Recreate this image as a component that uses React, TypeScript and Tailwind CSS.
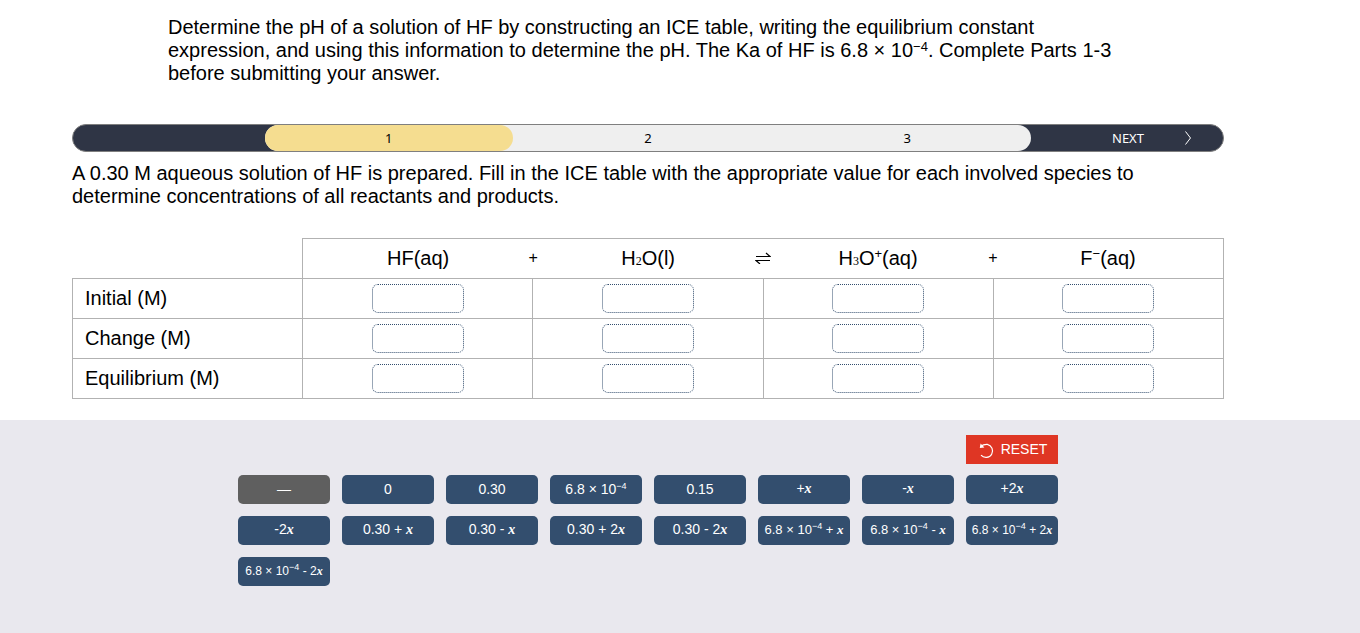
import type { ReactNode } from "react";
import { useState } from "react";

const X = () => <i className="font-['Liberation_Serif',serif] font-bold">x</i>;

const Sub = ({ children }: { children: ReactNode }) => (
  <span className="font-['Liberation_Serif',serif] text-xs">{children}</span>
);

const Sup = ({ children }: { children: ReactNode }) => (
  <sup className="text-[13px]">{children}</sup>
);

const Ka = () => (
  <>
    6.8 × 10<sup className="text-[9px]">−4</sup>
  </>
);

type Tile = {
  id: string;
  label: ReactNode;
  size?: "base" | "small" | "tiny";
  muted?: boolean;
};

const tiles: Tile[] = [
  { id: "blank", label: "—", muted: true },
  { id: "0", label: "0" },
  { id: "0.30", label: "0.30" },
  { id: "ka", label: <Ka /> },
  { id: "0.15", label: "0.15" },
  { id: "+x", label: <>+<X /></> },
  { id: "-x", label: <>-<X /></> },
  { id: "+2x", label: <>+2<X /></> },
  { id: "-2x", label: <>-2<X /></> },
  { id: "0.30+x", label: <>0.30 + <X /></> },
  { id: "0.30-x", label: <>0.30 - <X /></> },
  { id: "0.30+2x", label: <>0.30 + 2<X /></> },
  { id: "0.30-2x", label: <>0.30 - 2<X /></> },
  { id: "ka+x", label: <><Ka /> + <X /></>, size: "small" },
  { id: "ka-x", label: <><Ka /> - <X /></>, size: "small" },
  { id: "ka+2x", label: <><Ka /> + 2<X /></>, size: "tiny" },
  { id: "ka-2x", label: <><Ka /> - 2<X /></>, size: "tiny" },
];

const tileSizes = {
  base: "text-sm",
  small: "text-[13px]",
  tiny: "text-xs",
};

const species = ["HF(aq)", "H2O(l)", "H3O+(aq)", "F-(aq)"];
const rows = ["Initial (M)", "Change (M)", "Equilibrium (M)"];

const StepBar = () => {
  const [step, setStep] = useState(1);

  return (
    <nav
      aria-label="Parts"
      className="flex h-7 overflow-hidden rounded-full border border-[#7f7f7f] bg-[#2f3545] font-['Noto_Sans',sans-serif] text-[13px]"
    >
      <div className="w-1/6" />
      <div className="grid w-2/3 grid-cols-3 gap-[11px] rounded-full bg-[#efefef]">
        {[1, 2, 3].map((n) => (
          <button
            key={n}
            type="button"
            onClick={() => setStep(n)}
            className={
              n === step ? "rounded-full bg-[#f5dd90]" : "rounded-full"
            }
          >
            {n}
          </button>
        ))}
      </div>
      <button
        type="button"
        onClick={() => setStep(Math.min(3, step + 1))}
        className="flex w-1/6 items-center justify-end gap-10 pr-[31px] text-white"
      >
        NEXT
        <svg
          viewBox="0 0 8 16"
          className="h-4 w-2"
          fill="none"
          stroke="currentColor"
        >
          <path d="M1.5 1.5 L6.5 8 L1.5 14.5" />
        </svg>
      </button>
    </nav>
  );
};

const IceTable = () => (
  <table className="w-full table-fixed border-collapse text-xl">
    <thead>
      <tr className="h-10">
        <td />
        <th
          colSpan={4}
          scope="colgroup"
          className="border border-[#b2b2b2] p-0 pb-0.5 font-normal"
        >
          <div className="grid grid-cols-16 items-center text-center leading-6">
            <span className="col-span-2 col-start-2">HF(aq)</span>
            <span className="col-span-2 text-base">+</span>
            <span className="col-span-2">
              H<Sub>2</Sub>O(l)
            </span>
            <span className="col-span-2 flex justify-center">
              <svg
                viewBox="0 0 16 12"
                className="h-3 w-4"
                fill="none"
                stroke="currentColor"
                strokeWidth="1.2"
                role="img"
                aria-label="in equilibrium with"
              >
                <path d="M1 4.5 H15 L11 1 M15 8.5 H1 L5 12" />
              </svg>
            </span>
            <span className="col-span-2">
              H<Sub>3</Sub>O<Sup>+</Sup>(aq)
            </span>
            <span className="col-span-2 text-base">+</span>
            <span className="col-span-2">
              F<Sup>−</Sup>(aq)
            </span>
          </div>
        </th>
      </tr>
    </thead>
    <tbody>
      {rows.map((row) => (
        <tr key={row} className="h-10">
          <th
            scope="row"
            className="border border-[#b2b2b2] p-0 pb-0.5 pl-3 text-left font-normal"
          >
            {row}
          </th>
          {species.map((s) => (
            <td key={s} className="border border-[#b2b2b2] p-0">
              <input
                readOnly
                aria-label={`${row} ${s}`}
                className="mx-auto block h-[29px] w-[92px] rounded-md border border-dotted border-[#334e6e] bg-white text-center text-sm"
              />
            </td>
          ))}
        </tr>
      ))}
    </tbody>
  </table>
);

const TileTray = () => (
  <section
    aria-label="Answer tiles"
    className="flex-1 bg-[#e9e8ee] pt-[15px] pr-[136px] pb-10 pl-[72px]"
  >
    <div className="mx-auto flex max-w-[820px] flex-col">
      <button
        type="button"
        className="mb-[11px] flex h-[29px] w-[92px] items-center justify-center gap-1.5 self-end bg-[#df3624] pl-0.5 text-sm text-white"
      >
        <svg
          viewBox="0 0 16 16"
          className="mt-0.5 size-4"
          fill="none"
          stroke="currentColor"
          strokeWidth="1.2"
        >
          <path d="M1.5 3.5 C3.6 1.9 5.6 1.3 8.3 1.4 A6.6 6.6 0 1 1 2 12.2" />
          <path d="M1.6 0.4 L0.8 5 L5.4 4.4 Z" fill="currentColor" stroke="none" />
        </svg>
        <span className="pb-0.5">RESET</span>
      </button>
      <div className="flex flex-wrap gap-3">
        {tiles.map((tile) => (
          <button
            key={tile.id}
            type="button"
            className={`h-[29px] w-[92px] rounded-[5px] pb-0.5 whitespace-nowrap text-white ${
              tile.muted ? "bg-[#5f5f5f]" : "bg-[#334e6e]"
            } ${tileSizes[tile.size ?? "base"]}`}
          >
            {tile.label}
          </button>
        ))}
      </div>
    </div>
  </section>
);

export default function App() {
  return (
    <div className="flex min-h-screen flex-col bg-white font-['Liberation_Sans',Arial,sans-serif] text-black">
      <main className="pt-4 pr-[136px] pb-[21px] pl-[72px] text-xl leading-[23px]">
        <p className="mb-[39px] px-24">
          Determine the pH of a solution of HF by constructing an ICE table,
          writing the equilibrium constant expression, and using this
          information to determine the pH. The Ka of HF is 6.8 × 10
          <Sup>−4</Sup>. Complete Parts 1-3 before submitting your answer.
        </p>
        <StepBar />
        <p className="mt-2.5 mb-[30px]">
          A 0.30 M aqueous solution of HF is prepared. Fill in the ICE table
          with the appropriate value for each involved species to determine
          concentrations of all reactants and products.
        </p>
        <IceTable />
      </main>
      <TileTray />
    </div>
  );
}
